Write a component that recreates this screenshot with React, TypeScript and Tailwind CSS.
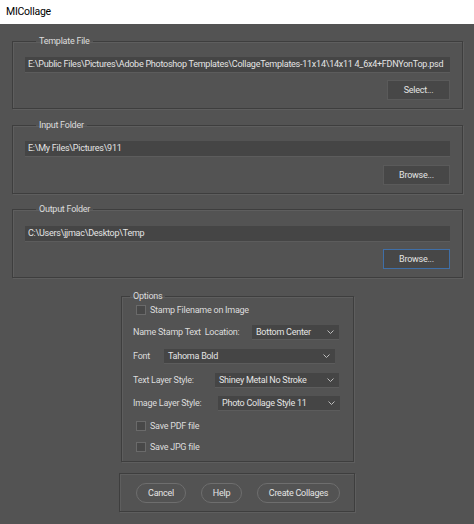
import React from "react";

const font = { fontFamily: 'Roboto, "Liberation Sans", sans-serif', letterSpacing: "-0.25px" };

function Group({ label, children, className = "", legendOffset = "ml-[11px]" }: { label?: string; children: React.ReactNode; className?: string; legendOffset?: string }) {
  return (
    <fieldset className={`min-w-0 border border-[#3e3e3e] shadow-[inset_1px_1px_0_#5e5e5e,1px_1px_0_#5e5e5e] ${className}`}>
      {label && <legend className={`${legendOffset} px-[3px] text-[9px] leading-[16px] text-[#dcdcdc] whitespace-nowrap`}>{label}</legend>}
      {children}
    </fieldset>
  );
}

function PathBox({ value }: { value: string }) {
  return (
    <div className="h-[16px] bg-[#454545] border-b border-[#5c5c5c] pl-[3px] text-[9px] leading-[15px] text-[#e4e4e4] whitespace-nowrap overflow-hidden">
      {value}
    </div>
  );
}

function SquareButton({ label, width, focused = false }: { label: string; width: string; focused?: boolean }) {
  return (
    <div className="flex justify-end">
      <button
        className={`${width} h-[20px] bg-[#474747] text-[9px] leading-[18px] text-[#e4e4e4] border ${
          focused ? "border-[#3f6fa8]" : "border-[#5a5a5a]"
        }`}
      >
        {label}
      </button>
    </div>
  );
}

function Check({ label }: { label: string }) {
  return (
    <div className="flex items-center gap-[4px] pl-[14px]">
      <span className="w-[10px] h-[10px] shrink-0 bg-[#484848] border border-[#6a6a6a]" />
      <span className="text-[9px] leading-[16px] text-[#dcdcdc] whitespace-nowrap">{label}</span>
    </div>
  );
}

function Select({ value, width }: { value: string; width: string }) {
  return (
    <div className={`${width} shrink-0 h-[15px] bg-[#454545] border-b border-[#5c5c5c] flex items-center justify-between pl-[4px] pr-[5px]`}>
      <span className="text-[9px] leading-[14px] text-[#e4e4e4] whitespace-nowrap">{value}</span>
      <svg width="7" height="4" viewBox="0 0 7 4" className="mt-[1px] shrink-0">
        <path d="M0.5 0.5 L3.5 3.5 L6.5 0.5" fill="none" stroke="#bdbdbd" strokeWidth="1" />
      </svg>
    </div>
  );
}

function Pill({ label, width }: { label: string; width: string }) {
  return (
    <button className={`${width} h-[20px] rounded-full border border-[#6e6e6e] bg-[#535353] text-[9px] leading-[18px] text-[#e4e4e4] whitespace-nowrap`}>
      {label}
    </button>
  );
}

export default function App() {
  return (
    <div className="w-[474px] h-[524px] bg-[#535353] flex flex-col overflow-hidden" style={font}>
      {/* Title bar */}
      <div className="h-[24px] shrink-0 bg-white flex items-center pl-[6px] text-[10.5px] text-black">MICollage</div>

      <div className="flex flex-col pl-[12px] pr-[11px] pt-[9px]">
        <Group label="Template File" className="px-[12px] pb-[8px]">
          <div className="mt-[8px]">
            <PathBox value="E:\Public Files\Pictures\Adobe Photoshop Templates\CollageTemplates-11x14\14x11 4_6x4+FDNYonTop.psd" />
          </div>
          <div className="mt-[7px]">
            <SquareButton label="Select..." width="w-[63px]" />
          </div>
        </Group>

        <Group label="Input Folder" className="mt-[8px] px-[12px] pb-[8px]">
          <div className="mt-[8px]">
            <PathBox value="E:\My Files\Pictures\911" />
          </div>
          <div className="mt-[8px]">
            <SquareButton label="Browse..." width="w-[67px]" />
          </div>
        </Group>

        <Group label="Output Folder" className="mt-[7px] px-[12px] pb-[8px]">
          <div className="mt-[9px]">
            <PathBox value="C:\Users\jjmac\Desktop\Temp" />
          </div>
          <div className="mt-[7px]">
            <SquareButton label="Browse..." width="w-[67px]" focused />
          </div>
        </Group>
      </div>

      {/* Options */}
      <div className="flex flex-col ml-[121px] w-[233px] mt-[10px]">
        <Group label="Options" className="pb-[6px]" legendOffset="ml-[8px]">
          <div className="flex flex-col -mt-[2px]">
            <Check label="Stamp Filename on Image" />
            <div className="flex items-center pl-[11px] mt-[6px]">
              <span className="w-[119px] shrink-0 text-[9px] leading-[16px] text-[#dcdcdc] whitespace-nowrap">Name Stamp Text&nbsp; Location:</span>
              <Select value="Bottom Center" width="w-[87px]" />
            </div>
            <div className="flex items-center pl-[11px] mt-[8px]">
              <span className="w-[31px] shrink-0 text-[9px] leading-[16px] text-[#dcdcdc]">Font</span>
              <Select value="Tahoma Bold" width="w-[171px]" />
            </div>
            <div className="flex items-center pl-[11px] mt-[8px]">
              <span className="w-[82px] shrink-0 text-[9px] leading-[16px] text-[#dcdcdc] whitespace-nowrap">Text Layer Style:</span>
              <Select value="Shiney Metal No Stroke" width="w-[124px]" />
            </div>
            <div className="flex items-center pl-[11px] mt-[7px]">
              <span className="w-[85px] shrink-0 text-[9px] leading-[16px] text-[#dcdcdc] whitespace-nowrap">Image Layer Style:</span>
              <Select value="Photo Collage Style 11" width="w-[122px]" />
            </div>
            <div className="mt-[7px]">
              <Check label="Save PDF file" />
            </div>
            <div className="mt-[5px]">
              <Check label="Save JPG file" />
            </div>
          </div>
        </Group>

        <div className="-ml-[2px] w-[236px] mt-[11px] h-[39px] border border-[#3e3e3e] shadow-[inset_1px_1px_0_#5e5e5e,1px_1px_0_#5e5e5e] flex items-center gap-[15px] pl-[16px]">
          <Pill label="Cancel" width="w-[50px]" />
          <Pill label="Help" width="w-[41px]" />
          <Pill label="Create Collages" width="w-[83px]" />
        </div>
      </div>
    </div>
  );
}
